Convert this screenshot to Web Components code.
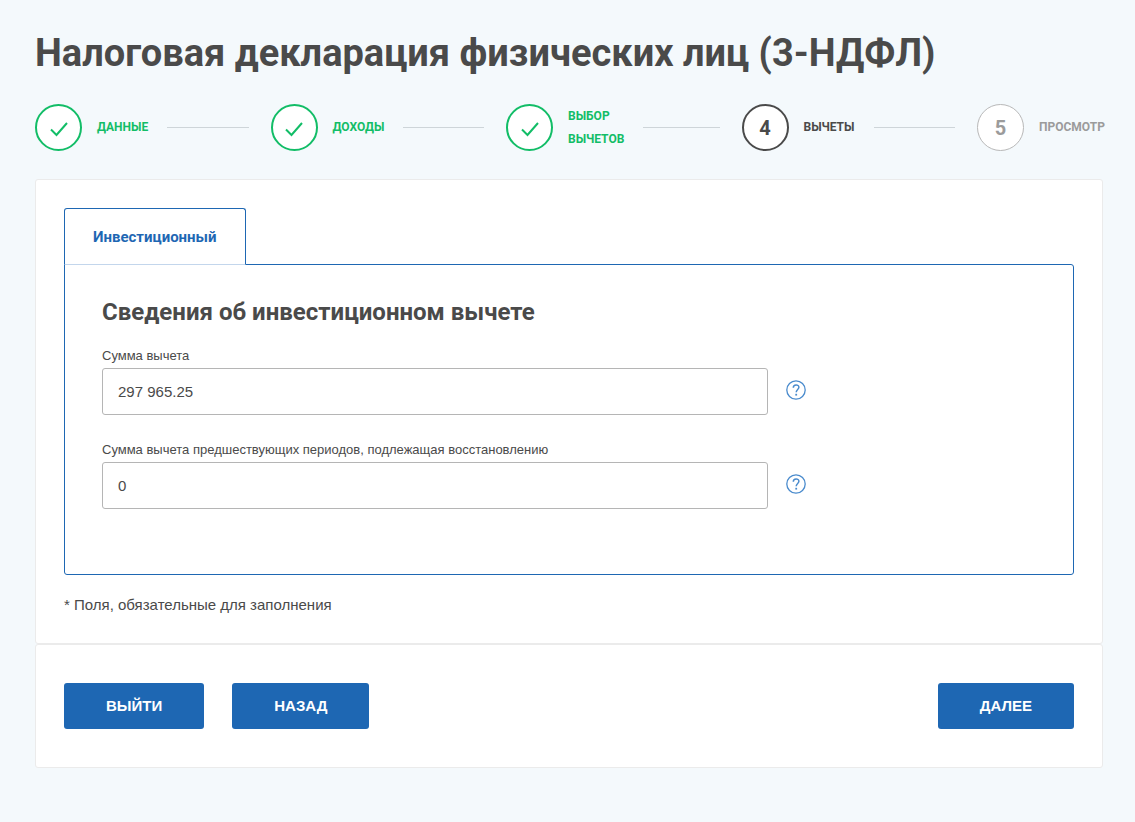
<!DOCTYPE html>
<html lang="ru">
<head>
<meta charset="utf-8">
<meta name="viewport" content="width=device-width, initial-scale=1">
<title>Налоговая декларация физических лиц (3-НДФЛ)</title>
<style>
  body {
    --ink: #4a4a4a;
    --blue: #1e67b3;
    --green: #12bd67;
    --muted: #9b9b9b;
    --display: "Roboto", sans-serif;
    margin: 0;
    background: #f4f9fc;
    color: var(--ink);
    font-family: "Liberation Sans", Arial, sans-serif;
    font-size: 15px;
    line-height: 20px;
  }
</style>
</head>
<body>
<tax-page></tax-page>

<script>
const define = (name, html, setup) => {
  const template = document.createElement('template');
  template.innerHTML = html;
  customElements.define(name, class extends HTMLElement {
    connectedCallback() {
      if (this.shadowRoot) return;
      const root = this.attachShadow({ mode: 'open' });
      root.append(template.content.cloneNode(true));
      if (setup) setup(this, root);
    }
  });
};

define('progress-step', `
<style>
  :host { display: flex; align-items: center; flex: 1 1 0; min-width: 0; --tone: var(--green); }
  :host([state="current"]) { --tone: var(--ink); }
  :host([state="next"]) { --tone: var(--muted); flex: 0 0 126px; }
  .mark {
    box-sizing: border-box; flex: none; width: 47px; height: 47px;
    display: flex; align-items: center; justify-content: center;
    border: 2px solid var(--tone); border-radius: 50%; background: #fff;
    font-size: 20px;
  }
  :host([state="next"]) .mark { border: 1px solid #b8b8b8; }
  svg { display: none; width: 20px; height: 18px; }
  :host([state="done"]) svg { display: block; }
  .mark, .label { color: var(--tone); font-family: var(--display); font-weight: 700; }
  .label { margin-left: 15px; font-size: 12px; line-height: 23px; text-transform: uppercase; }
  .line { flex: 1 1 0; height: 1px; margin: 0 22px 0 19px; background: #ced5d9; }
  :host([state="next"]) .line { display: none; }
</style>
<span class="mark"><svg viewBox="0 0 20 18" aria-hidden="true"><path d="M2 10.5 7.5 16 18 4" fill="none" stroke="currentColor" stroke-width="2"/></svg><span class="number"></span></span>
<span class="label"><slot></slot></span>
<span class="line"></span>`,
(host, root) => { root.querySelector('.number').textContent = host.getAttribute('number') || ''; });

define('form-card', `
<style>
  :host { display: block; padding: 28px; border: 1px solid #ebebeb; border-radius: 3px; background: #fff; }
</style>
<slot></slot>`);

define('tab-panel', `
<style>
  :host { display: block; }
  button {
    display: block; position: relative; box-sizing: border-box; height: 57px; padding: 0 28px; margin: 0 0 -1px;
    border: 1px solid var(--blue); border-bottom-color: #c3d6ec; border-radius: 3px 3px 0 0;
    background: #fff; color: var(--blue);
    font: 700 15px/24px var(--display);
  }
  section { padding: 28px 37px 65px; border: 1px solid var(--blue); border-radius: 0 3px 3px 3px; }
</style>
<button type="button" role="tab" aria-selected="true"></button>
<section role="tabpanel"><slot></slot></section>`,
(host, root) => { root.querySelector('button').textContent = host.getAttribute('label'); });

define('amount-field', `
<style>
  :host { display: block; }
  label { display: block; margin-bottom: 3px; font-size: 13px; line-height: 18px; }
  .row { display: flex; align-items: center; gap: 17px; }
  input {
    box-sizing: border-box; flex: 0 1 666px; min-width: 0; height: 47px; padding: 0 15px;
    border: 1px solid #b5b5b5; border-radius: 3px; background: #fff; color: var(--ink);
    font: inherit; outline: none;
  }
  button { flex: none; width: 22px; height: 22px; margin-bottom: 4px; padding: 0; border: 0; background: none; color: #4a8bcd; }
  svg { display: block; }
</style>
<label for="amount"></label>
<div class="row">
  <input id="amount" type="text" inputmode="decimal">
  <button type="button" aria-label="Справка">
    <svg width="22" height="22" viewBox="0 0 22 22" fill="none" stroke="currentColor" aria-hidden="true">
      <circle cx="11" cy="11" r="9.2" stroke-width="1.3"/>
      <path d="M8.3 8.8c0-3.9 5.6-3.7 5.6-.5 0 2.2-2.7 2.2-2.7 5" stroke-width="1.5"/>
      <path d="M11.2 14.8v1.8" stroke-width="1.8"/>
    </svg>
  </button>
</div>`,
(host, root) => {
  root.querySelector('label').textContent = host.getAttribute('label');
  root.querySelector('input').value = host.getAttribute('value');
});

define('action-button', `
<style>
  :host { display: block; }
  button {
    display: block; height: 46px; padding: 0 42px; border: 0; border-radius: 3px;
    background: var(--blue); color: #fff; font: 700 15px/20px "Liberation Sans", Arial, sans-serif; text-transform: uppercase;
  }
</style>
<button type="button"><slot></slot></button>`);

define('tax-page', `
<style>
  :host { display: block; padding: 24px 32px 54px 35px; }
  h1, h2 { margin: 0; font-family: var(--display); font-weight: 700; }
  h1 { font-size: 38px; line-height: 58px; }
  h2 { margin-bottom: 16px; font-size: 24px; line-height: 38px; }
  nav { display: flex; align-items: center; margin: 22px 0 28px; }
  amount-field + amount-field { margin-top: 26px; }
  .note { margin: 20px 0 0; }
  .actions { display: flex; gap: 28px; padding: 10px 0; }
  .actions :last-child { margin-left: auto; }
</style>
<h1>Налоговая декларация физических лиц (3-НДФЛ)</h1>
<nav aria-label="Шаги">
  <progress-step state="done">Данные</progress-step>
  <progress-step state="done">Доходы</progress-step>
  <progress-step state="done">Выбор<br>вычетов</progress-step>
  <progress-step state="current" number="4">Вычеты</progress-step>
  <progress-step state="next" number="5">Просмотр</progress-step>
</nav>
<form-card>
  <tab-panel label="Инвестиционный">
    <h2>Сведения об инвестиционном вычете</h2>
    <amount-field label="Сумма вычета" value="297 965.25"></amount-field>
    <amount-field label="Сумма вычета предшествующих периодов, подлежащая восстановлению" value="0"></amount-field>
  </tab-panel>
  <p class="note">* Поля, обязательные для заполнения</p>
</form-card>
<form-card>
  <div class="actions">
    <action-button>Выйти</action-button>
    <action-button>Назад</action-button>
    <action-button>Далее</action-button>
  </div>
</form-card>`);
</script>
</body>
</html>
